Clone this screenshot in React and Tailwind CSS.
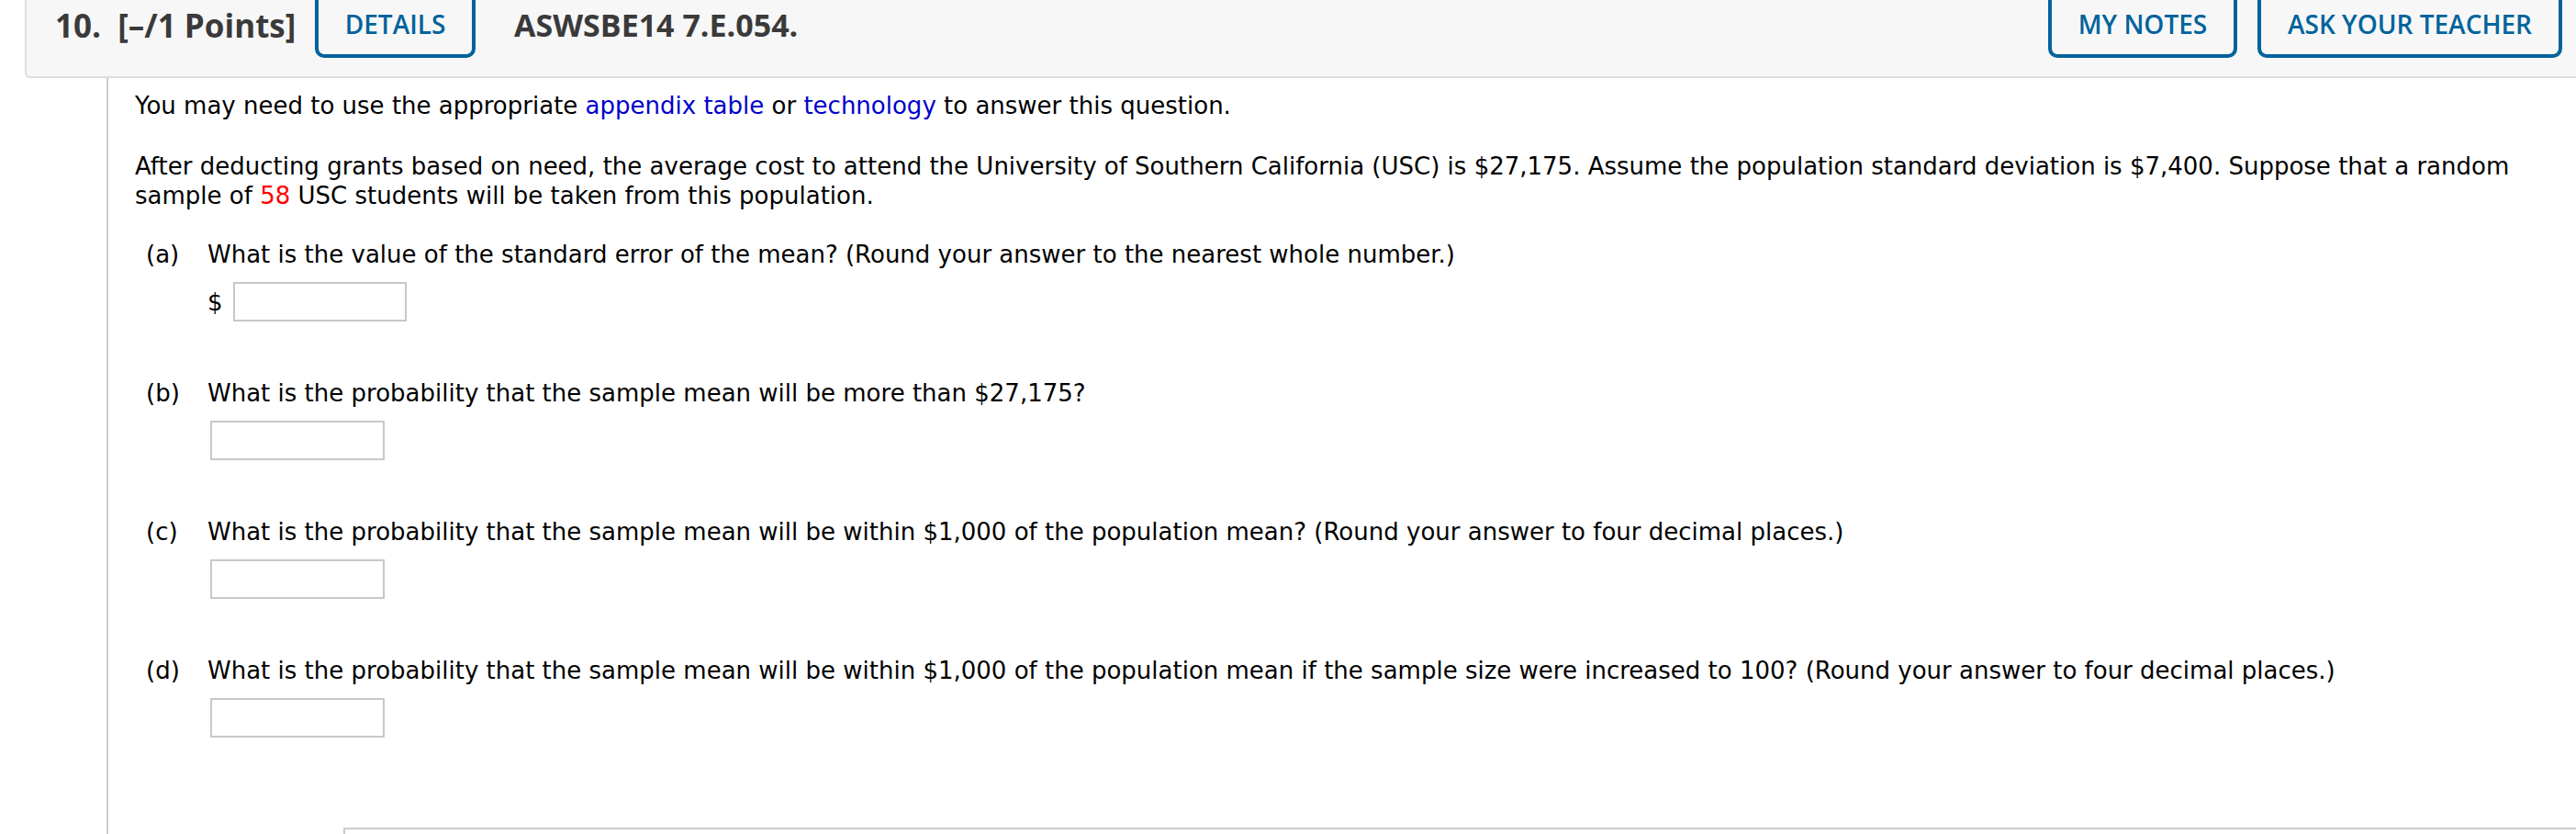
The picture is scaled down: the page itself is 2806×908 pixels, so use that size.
const parts = [
  {
    label: "(a)",
    text: "What is the value of the standard error of the mean? (Round your answer to the nearest whole number.)",
    dollar: true,
  },
  {
    label: "(b)",
    text: "What is the probability that the sample mean will be more than $27,175?",
  },
  {
    label: "(c)",
    text: "What is the probability that the sample mean will be within $1,000 of the population mean? (Round your answer to four decimal places.)",
  },
  {
    label: "(d)",
    text: "What is the probability that the sample mean will be within $1,000 of the population mean if the sample size were increased to 100? (Round your answer to four decimal places.)",
  },
];

const HeaderButton = ({ children, className }) => (
  <button
    className={`h-[90px] border-4 border-[#00639c] rounded-[10px] text-[#00639c] text-[28px] leading-none font-semibold flex items-start justify-center pt-[35px] ${className}`}
    style={{ fontFamily: '"Open Sans", sans-serif' }}
  >
    {children}
  </button>
);

const Part = ({ part, first }) => (
  <div className={first ? "" : "mt-[62px]"}>
    <div className="flex pl-[12px]">
      <div className="w-[67px] shrink-0">{part.label}</div>
      <div>{part.text}</div>
    </div>
    <div className="flex items-center mt-[14px] pl-[79px]">
      {part.dollar ? (
        <>
          <span className="w-[28px]">$</span>
          <input className="w-[189px] h-[43px] border-2 border-[#c8c8c8] bg-white outline-none" />
        </>
      ) : (
        <input className="w-[190px] h-[43px] ml-[3px] border-2 border-[#c8c8c8] bg-white outline-none" />
      )}
    </div>
  </div>
);

export default function App() {
  return (
    <div className="w-[2806px] h-[908px] overflow-hidden bg-white">
      <div className="-mt-[27px] ml-[27px] h-[112px] bg-[#f7f7f7] border-l-2 border-b-2 border-[#dddddd] rounded-bl-[6px] flex items-start">
        <div
          className="pt-[37px] pl-[31px] text-[35px] leading-none font-bold text-[#3a3a3a] whitespace-pre w-[284px]"
          style={{ fontFamily: '"Open Sans", sans-serif' }}
        >
          {"10.  [–/1 Points]"}
        </div>
        <HeaderButton className="ml-[30px] w-[175px]">DETAILS</HeaderButton>
        <div
          className="pt-[37px] ml-[42px] text-[34px] leading-none font-bold text-[#3a3a3a]"
          style={{ fontFamily: '"Open Sans", sans-serif' }}
        >
          ASWSBE14 7.E.054.
        </div>
        <div className="flex-1" />
        <HeaderButton className="w-[206px]">MY NOTES</HeaderButton>
        <HeaderButton className="ml-[22px] mr-[15px] w-[332px]">ASK YOUR TEACHER</HeaderButton>
      </div>

      <div className="ml-[116px] border-l-2 border-[#cccccc] h-[830px]">
        <div
          className="pl-[29px] pt-[14px] text-[26px] leading-[32px] text-black"
          style={{ fontFamily: '"DejaVu Sans", Verdana, sans-serif' }}
        >
          <p>
            You may need to use the appropriate{" "}
            <span className="text-[#0000cc]">appendix table</span> or{" "}
            <span className="text-[#0000cc]">technology</span> to answer this question.
          </p>
          <p className="mt-[34px] pr-[40px]">
            After deducting grants based on need, the average cost to attend the University of Southern
            California (USC) is $27,175. Assume the population standard deviation is $7,400. Suppose that a
            random sample of <span className="text-[#ff0000]">58</span> USC students will be taken from this
            population.
          </p>
          <div className="mt-[32px]">
            {parts.map((p, i) => (
              <Part key={p.label} part={p} first={i === 0} />
            ))}
          </div>
          <div className="mt-[98px] ml-[227px] h-[20px] border-t-2 border-l-2 border-[#cccccc]" />
        </div>
      </div>
    </div>
  );
}
